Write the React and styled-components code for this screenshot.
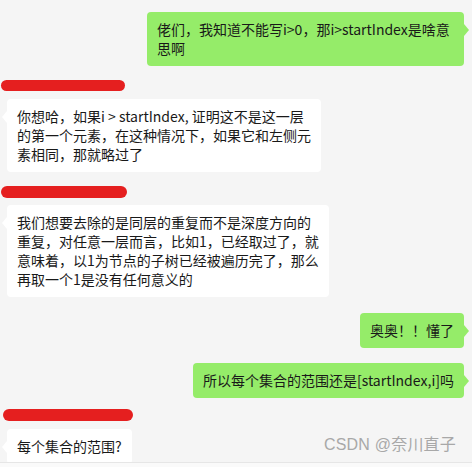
import React from "react";
import styled, { createGlobalStyle } from "styled-components";

const GlobalStyle = createGlobalStyle`
  html, body {
    margin: 0;
    padding: 0;
    background: #f5f5f5;
  }
  body {
    font-family: "Noto Sans CJK SC", "Microsoft YaHei", sans-serif;
  }
`;

const Chat = styled.div`
  position: relative;
  width: 472px;
  height: 467px;
  box-sizing: border-box;
  padding-top: 12px;
  background: #f5f5f5;
  overflow: hidden;
  display: flex;
  flex-direction: column;
  border-bottom: 4px solid #fafafa;
  &::after {
    content: "";
    position: absolute;
    left: 0;
    right: 0;
    bottom: 0;
    height: 1px;
    background: #e6e6e6;
  }
`;

const Row = styled.div`
  display: flex;
  flex-direction: column;
  align-items: ${(p) => (p.$mine ? "flex-end" : "flex-start")};
  margin-top: ${(p) => p.$top || 0}px;
  padding: ${(p) => (p.$mine ? "0 8px 0 0" : "0 0 0 7px")};
`;

// redacted nickname
const NameBar = styled.div`
  width: ${(p) => p.$w}px;
  height: ${(p) => p.$h || 12}px;
  margin-left: ${(p) => p.$x - 7}px;
  margin-bottom: ${(p) => p.$gap || 8}px;
  border-radius: 6px;
  background: #e51f1f;
`;

const Bubble = styled.div`
  position: relative;
  box-sizing: border-box;
  width: ${(p) => (p.$w ? `${p.$w}px` : "auto")};
  padding: 8px 10px;
  border-radius: 4px;
  background: ${(p) => (p.$mine ? "#95ec69" : "#ffffff")};
  color: #191919;
  font-size: 14px;
  line-height: 19px;

  &::before {
    content: "";
    position: absolute;
    top: 12px;
    ${(p) => (p.$mine ? "right: -5px;" : "left: -5px;")}
    border-top: 6px solid transparent;
    border-bottom: 6px solid transparent;
    ${(p) =>
      p.$mine
        ? "border-left: 5px solid #95ec69;"
        : "border-right: 5px solid #ffffff;"}
  }
`;

const Line = styled.span`
  display: block;
  white-space: nowrap;
`;

const Watermark = styled.div`
  position: absolute;
  right: 16px;
  bottom: 8px;
  font-family: "Liberation Sans", "Noto Sans CJK SC", sans-serif;
  font-size: 16px;
  color: #a8a8a8;
  letter-spacing: 0.2px;
`;

const Text = ({ lines }) => lines.map((l, i) => <Line key={i}>{l}</Line>);

export default function App() {
  return (
    <>
      <GlobalStyle />
      <Chat>
        <Row $mine>
          <Bubble $mine $w={317}>
            <Text
              lines={["佬们，我知道不能写i>0，那i>startIndex是啥意", "思啊"]}
            />
          </Bubble>
        </Row>

        <Row $top={14}>
          <NameBar $x={1} $w={124} $h={11} />
          <Bubble $w={314}>
            <Text
              lines={[
                "你想哈，如果i > startIndex, 证明这不是这一层",
                "的第一个元素，在这种情况下，如果它和左侧元",
                "素相同，那就略过了",
              ]}
            />
          </Bubble>
        </Row>

        <Row $top={14}>
          <NameBar $x={1} $w={126} $gap={7} />
          <Bubble $w={322}>
            <Text
              lines={[
                "我们想要去除的是同层的重复而不是深度方向的",
                "重复，对任意一层而言，比如1，已经取过了，就",
                "意味着，以1为节点的子树已经被遍历完了，那么",
                "再取一个1是没有任何意义的",
              ]}
            />
          </Bubble>
        </Row>

        <Row $mine $top={16}>
          <Bubble $mine>奥奥！！懂了</Bubble>
        </Row>

        <Row $mine $top={15}>
          <Bubble $mine>所以每个集合的范围还是[startIndex,i]吗</Bubble>
        </Row>

        <Row $top={11}>
          <NameBar $x={3} $w={130} />
          <Bubble>每个集合的范围?</Bubble>
        </Row>

        <Watermark>CSDN @奈川直子</Watermark>
      </Chat>
    </>
  );
}
